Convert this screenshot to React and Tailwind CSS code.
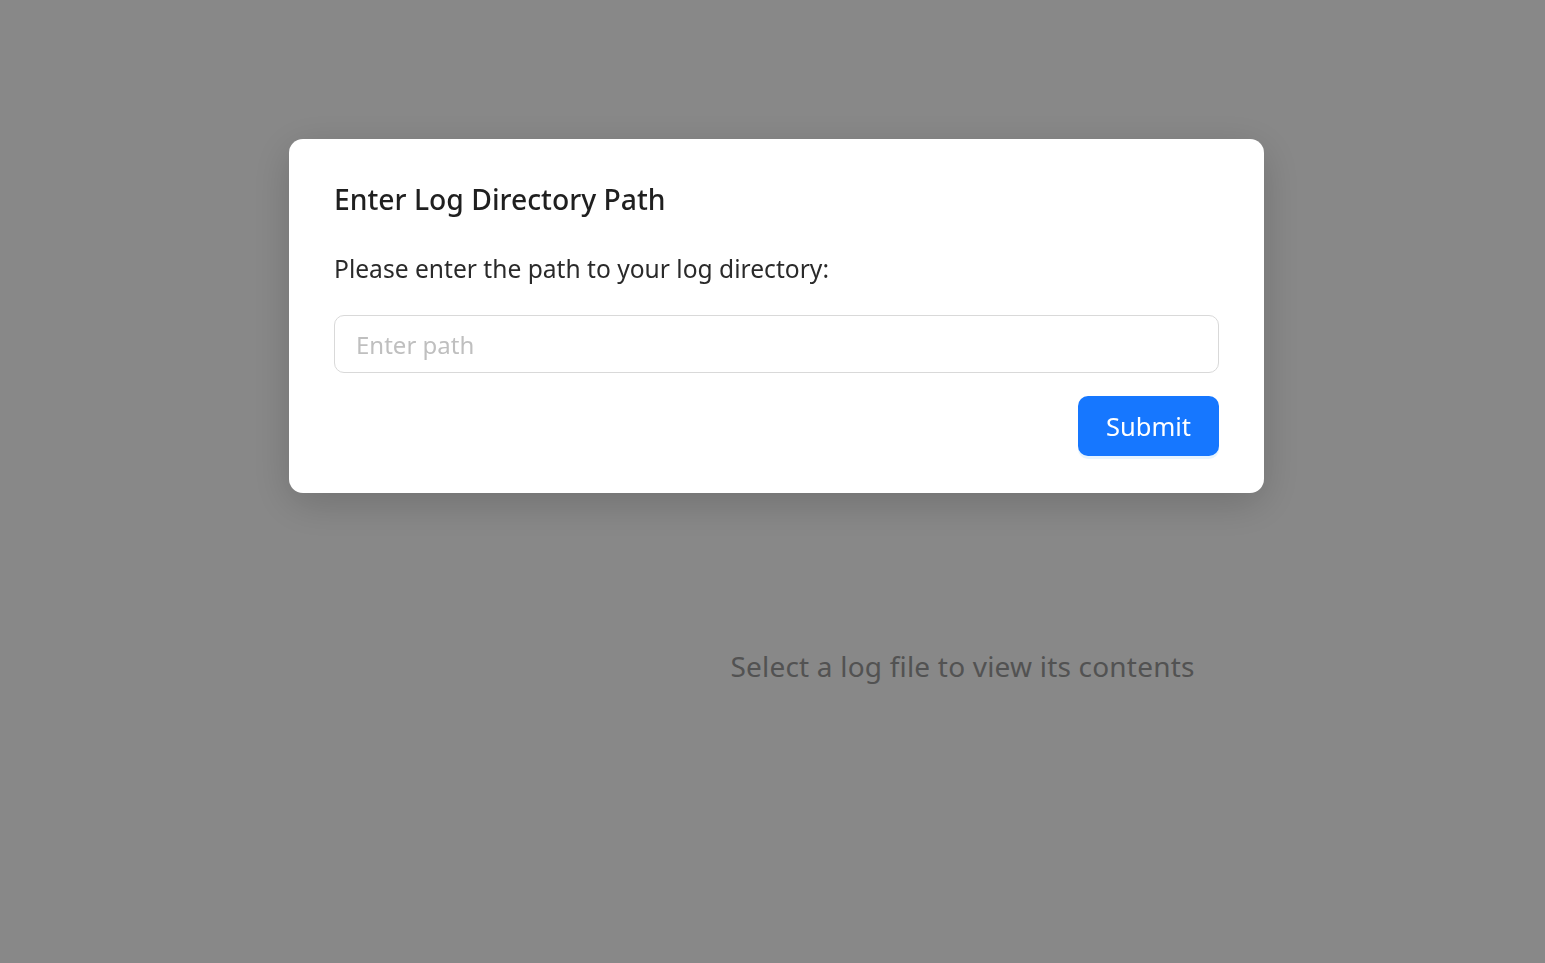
import React, { useState } from 'react';

const font = { fontFamily: '"Noto Sans", "Open Sans", sans-serif' };

const PathModal = () => {
    const [path, setPath] = useState('');

    return (
        <div className="fixed inset-0 bg-black/[0.465] z-40">
            <div className="ml-[289px] mt-[139px] w-[975px] bg-white rounded-[14px] shadow-[0_10px_40px_rgba(0,0,0,0.18)] px-[45px] pt-[39px] pb-[37px]">
                <h2 className="text-[28.3px] leading-[42px] font-medium text-[#1f1f1f]">Enter Log Directory Path</h2>
                <p className="mt-[31px] text-[24.6px] leading-[36px] text-[#2a2a2a]">
                    Please enter the path to your log directory:
                </p>
                <input
                    value={path}
                    onChange={e => setPath(e.target.value)}
                    placeholder="Enter path"
                    className="mt-[28px] w-full h-[58px] px-[21px] border border-[#d9d9d9] rounded-[10px] text-[24px] text-[#1f1f1f] placeholder:text-[#bfbfbf] outline-none"
                    style={font}
                />
                <div className="flex justify-end mt-[23px]">
                    <button className="h-[60px] w-[141px] rounded-[10px] bg-[#1677ff] text-white text-[25.5px] shadow-[0_3px_0_rgba(5,145,255,0.1)]" style={font}>
                        Submit
                    </button>
                </div>
            </div>
        </div>
    );
};

export default function App() {
    return (
        <div className="h-screen w-full flex bg-white" style={font}>
            <aside className="w-[380px] shrink-0 bg-white"></aside>
            <main className="flex-1 flex justify-center pt-[645px]">
                <p className="text-[28px] leading-[42px] text-[#9a9a9a] tracking-[0.2px]">Select a log file to view its contents</p>
            </main>
            <PathModal />
        </div>
    );
}
